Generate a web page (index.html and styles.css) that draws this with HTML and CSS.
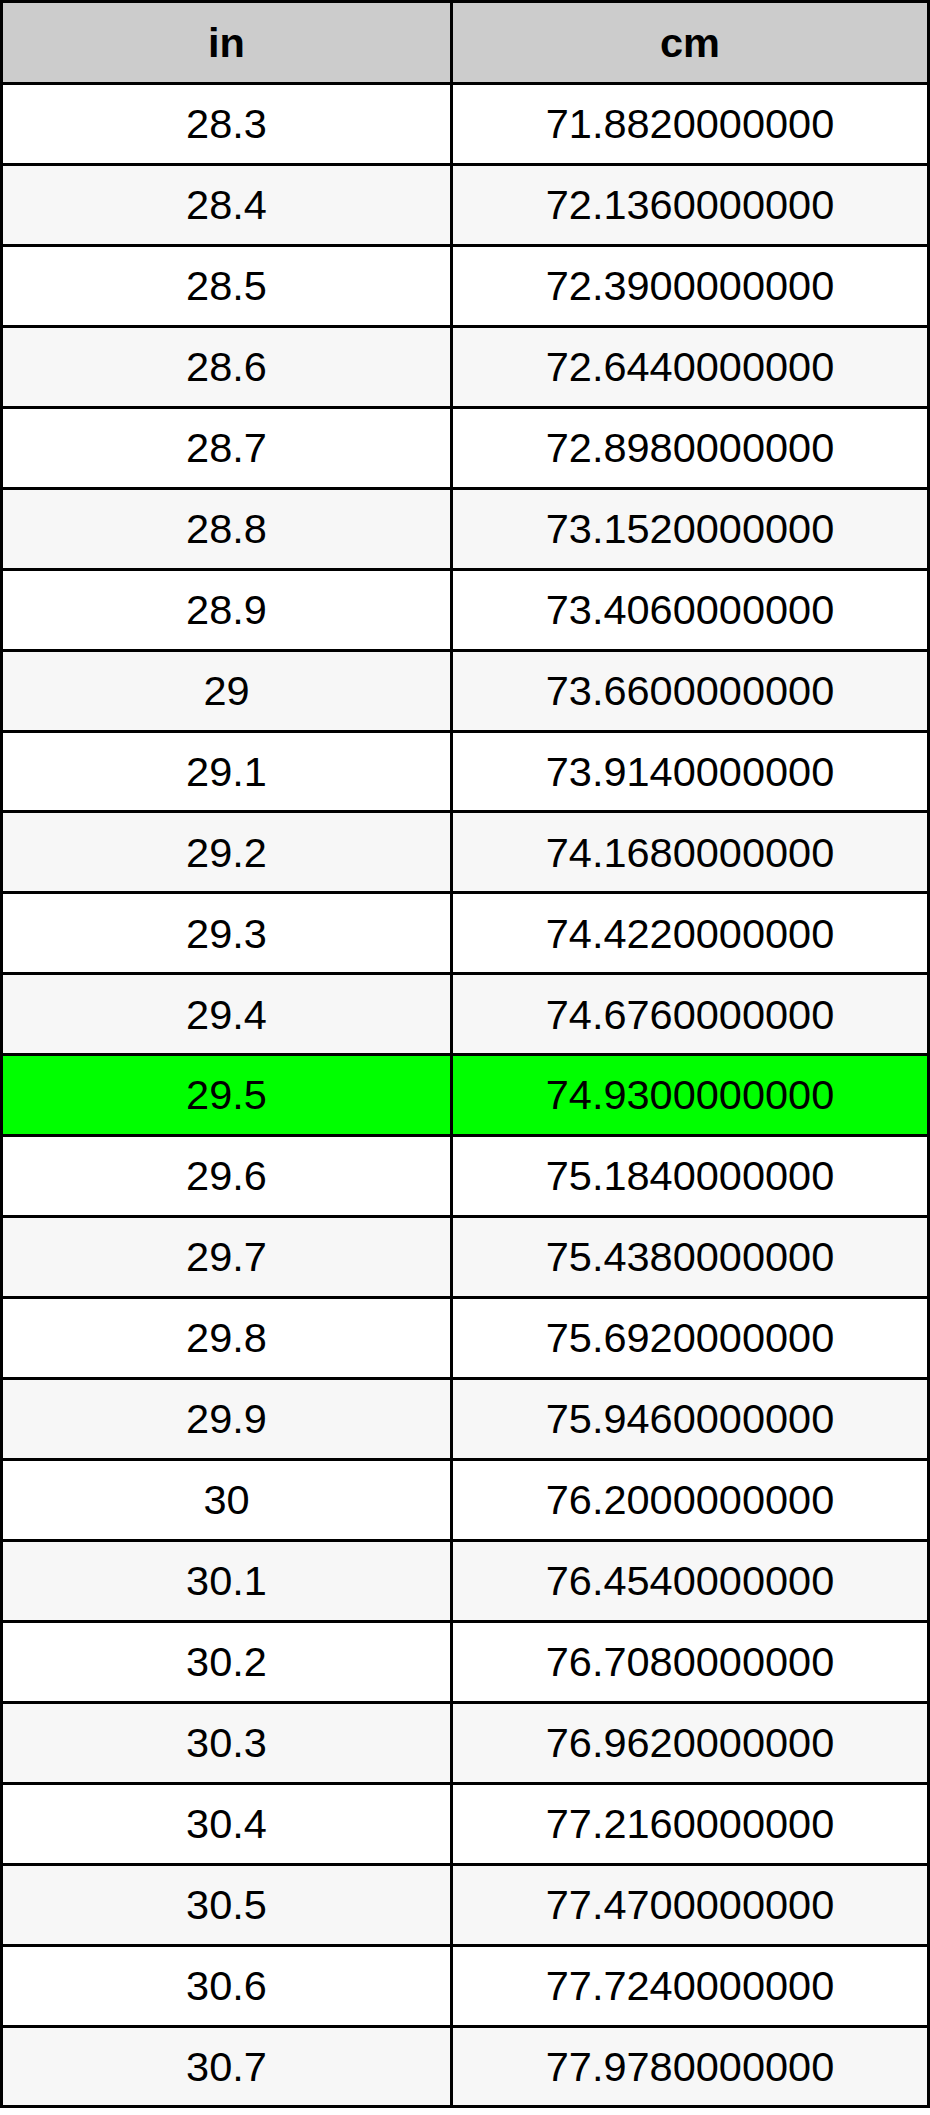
FILE: index.html
```html
<!DOCTYPE html>
<html>
<head>
<meta charset="utf-8">
<link rel="stylesheet" href="styles.css">
</head>
<body>
<table class="conv">
<thead>
<tr><th class="c1">in</th><th class="c2">cm</th></tr>
</thead>
<tbody>
<tr><td>28.3</td><td>71.8820000000</td></tr>
<tr class="alt"><td>28.4</td><td>72.1360000000</td></tr>
<tr><td>28.5</td><td>72.3900000000</td></tr>
<tr class="alt"><td>28.6</td><td>72.6440000000</td></tr>
<tr><td>28.7</td><td>72.8980000000</td></tr>
<tr class="alt"><td>28.8</td><td>73.1520000000</td></tr>
<tr><td>28.9</td><td>73.4060000000</td></tr>
<tr class="alt"><td>29</td><td>73.6600000000</td></tr>
<tr><td>29.1</td><td>73.9140000000</td></tr>
<tr class="alt"><td>29.2</td><td>74.1680000000</td></tr>
<tr><td>29.3</td><td>74.4220000000</td></tr>
<tr class="alt"><td>29.4</td><td>74.6760000000</td></tr>
<tr class="hl"><td>29.5</td><td>74.9300000000</td></tr>
<tr><td>29.6</td><td>75.1840000000</td></tr>
<tr class="alt"><td>29.7</td><td>75.4380000000</td></tr>
<tr><td>29.8</td><td>75.6920000000</td></tr>
<tr class="alt"><td>29.9</td><td>75.9460000000</td></tr>
<tr><td>30</td><td>76.2000000000</td></tr>
<tr class="alt"><td>30.1</td><td>76.4540000000</td></tr>
<tr><td>30.2</td><td>76.7080000000</td></tr>
<tr class="alt"><td>30.3</td><td>76.9620000000</td></tr>
<tr><td>30.4</td><td>77.2160000000</td></tr>
<tr class="alt"><td>30.5</td><td>77.4700000000</td></tr>
<tr><td>30.6</td><td>77.7240000000</td></tr>
<tr class="alt"><td>30.7</td><td>77.9780000000</td></tr>
</tbody>
</table>
</body>
</html>
```
FILE: styles.css
```css
html, body {
  margin: 0;
  padding: 0;
  background: #ffffff;
}
.conv {
  border-collapse: collapse;
  width: 930px;
  table-layout: fixed;
  font-family: "Liberation Sans", Arial, sans-serif;
  font-size: 41.5px;
  color: #000;
}
.conv th, .conv td {
  border: 3px solid #000;
  text-align: center;
  vertical-align: middle;
  padding: 0;
  line-height: 1;
}
.conv th {
  background: #cccccc;
  font-weight: bold;
  height: 79px;
}
.conv td {
  height: 77.94px;
}
.c1 { width: 447px; }
.conv tr.alt td { background: #f7f7f7; }
.conv tr.hl td { background: #00ff00; }
```
